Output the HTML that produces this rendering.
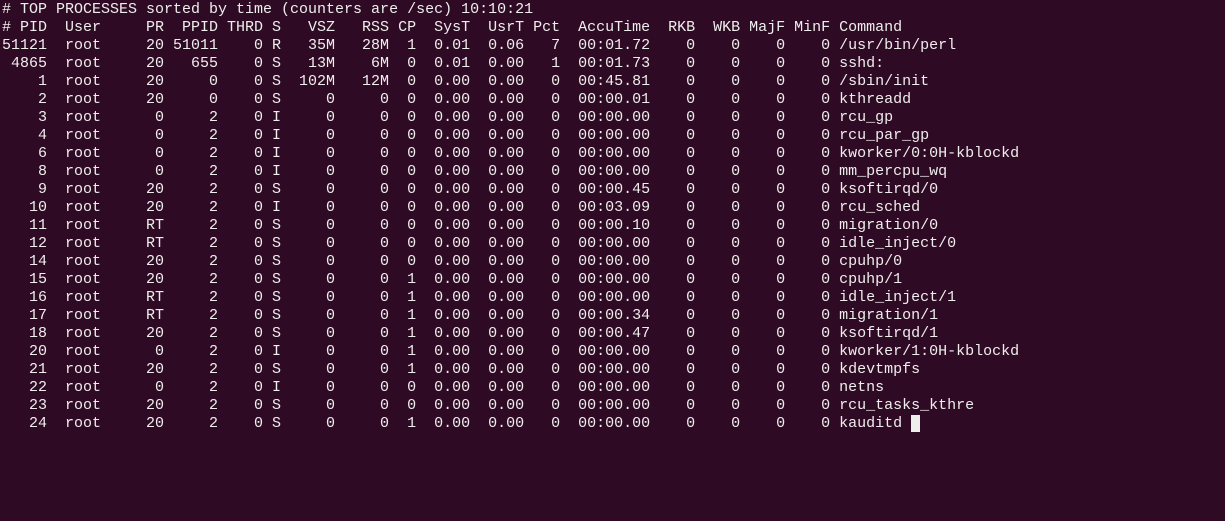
<!DOCTYPE html>
<html><head><meta charset="utf-8"><style>
html,body{margin:0;padding:0;background:#2f0a24;width:1225px;height:521px;overflow:hidden}
pre{margin:0;position:absolute;left:2px;top:1px;font-family:"Liberation Mono","DejaVu Sans Mono",monospace;font-size:15px;line-height:18px;color:#eeeeec;white-space:pre}
.c{background:#eeeeec;color:#2f0a24}
</style></head><body><pre># TOP PROCESSES sorted by time (counters are /sec) 10:10:21
# PID  User     PR  PPID THRD S   VSZ   RSS CP  SysT  UsrT Pct  AccuTime  RKB  WKB MajF MinF Command
51121  root     20 51011    0 R   35M   28M  1  0.01  0.06   7  00:01.72    0    0    0    0 /usr/bin/perl
 4865  root     20   655    0 S   13M    6M  0  0.01  0.00   1  00:01.73    0    0    0    0 sshd:
    1  root     20     0    0 S  102M   12M  0  0.00  0.00   0  00:45.81    0    0    0    0 /sbin/init
    2  root     20     0    0 S     0     0  0  0.00  0.00   0  00:00.01    0    0    0    0 kthreadd
    3  root      0     2    0 I     0     0  0  0.00  0.00   0  00:00.00    0    0    0    0 rcu_gp
    4  root      0     2    0 I     0     0  0  0.00  0.00   0  00:00.00    0    0    0    0 rcu_par_gp
    6  root      0     2    0 I     0     0  0  0.00  0.00   0  00:00.00    0    0    0    0 kworker/0:0H-kblockd
    8  root      0     2    0 I     0     0  0  0.00  0.00   0  00:00.00    0    0    0    0 mm_percpu_wq
    9  root     20     2    0 S     0     0  0  0.00  0.00   0  00:00.45    0    0    0    0 ksoftirqd/0
   10  root     20     2    0 I     0     0  0  0.00  0.00   0  00:03.09    0    0    0    0 rcu_sched
   11  root     RT     2    0 S     0     0  0  0.00  0.00   0  00:00.10    0    0    0    0 migration/0
   12  root     RT     2    0 S     0     0  0  0.00  0.00   0  00:00.00    0    0    0    0 idle_inject/0
   14  root     20     2    0 S     0     0  0  0.00  0.00   0  00:00.00    0    0    0    0 cpuhp/0
   15  root     20     2    0 S     0     0  1  0.00  0.00   0  00:00.00    0    0    0    0 cpuhp/1
   16  root     RT     2    0 S     0     0  1  0.00  0.00   0  00:00.00    0    0    0    0 idle_inject/1
   17  root     RT     2    0 S     0     0  1  0.00  0.00   0  00:00.34    0    0    0    0 migration/1
   18  root     20     2    0 S     0     0  1  0.00  0.00   0  00:00.47    0    0    0    0 ksoftirqd/1
   20  root      0     2    0 I     0     0  1  0.00  0.00   0  00:00.00    0    0    0    0 kworker/1:0H-kblockd
   21  root     20     2    0 S     0     0  1  0.00  0.00   0  00:00.00    0    0    0    0 kdevtmpfs
   22  root      0     2    0 I     0     0  0  0.00  0.00   0  00:00.00    0    0    0    0 netns
   23  root     20     2    0 S     0     0  0  0.00  0.00   0  00:00.00    0    0    0    0 rcu_tasks_kthre
   24  root     20     2    0 S     0     0  1  0.00  0.00   0  00:00.00    0    0    0    0 kauditd <span class="c"> </span></pre></body></html>
